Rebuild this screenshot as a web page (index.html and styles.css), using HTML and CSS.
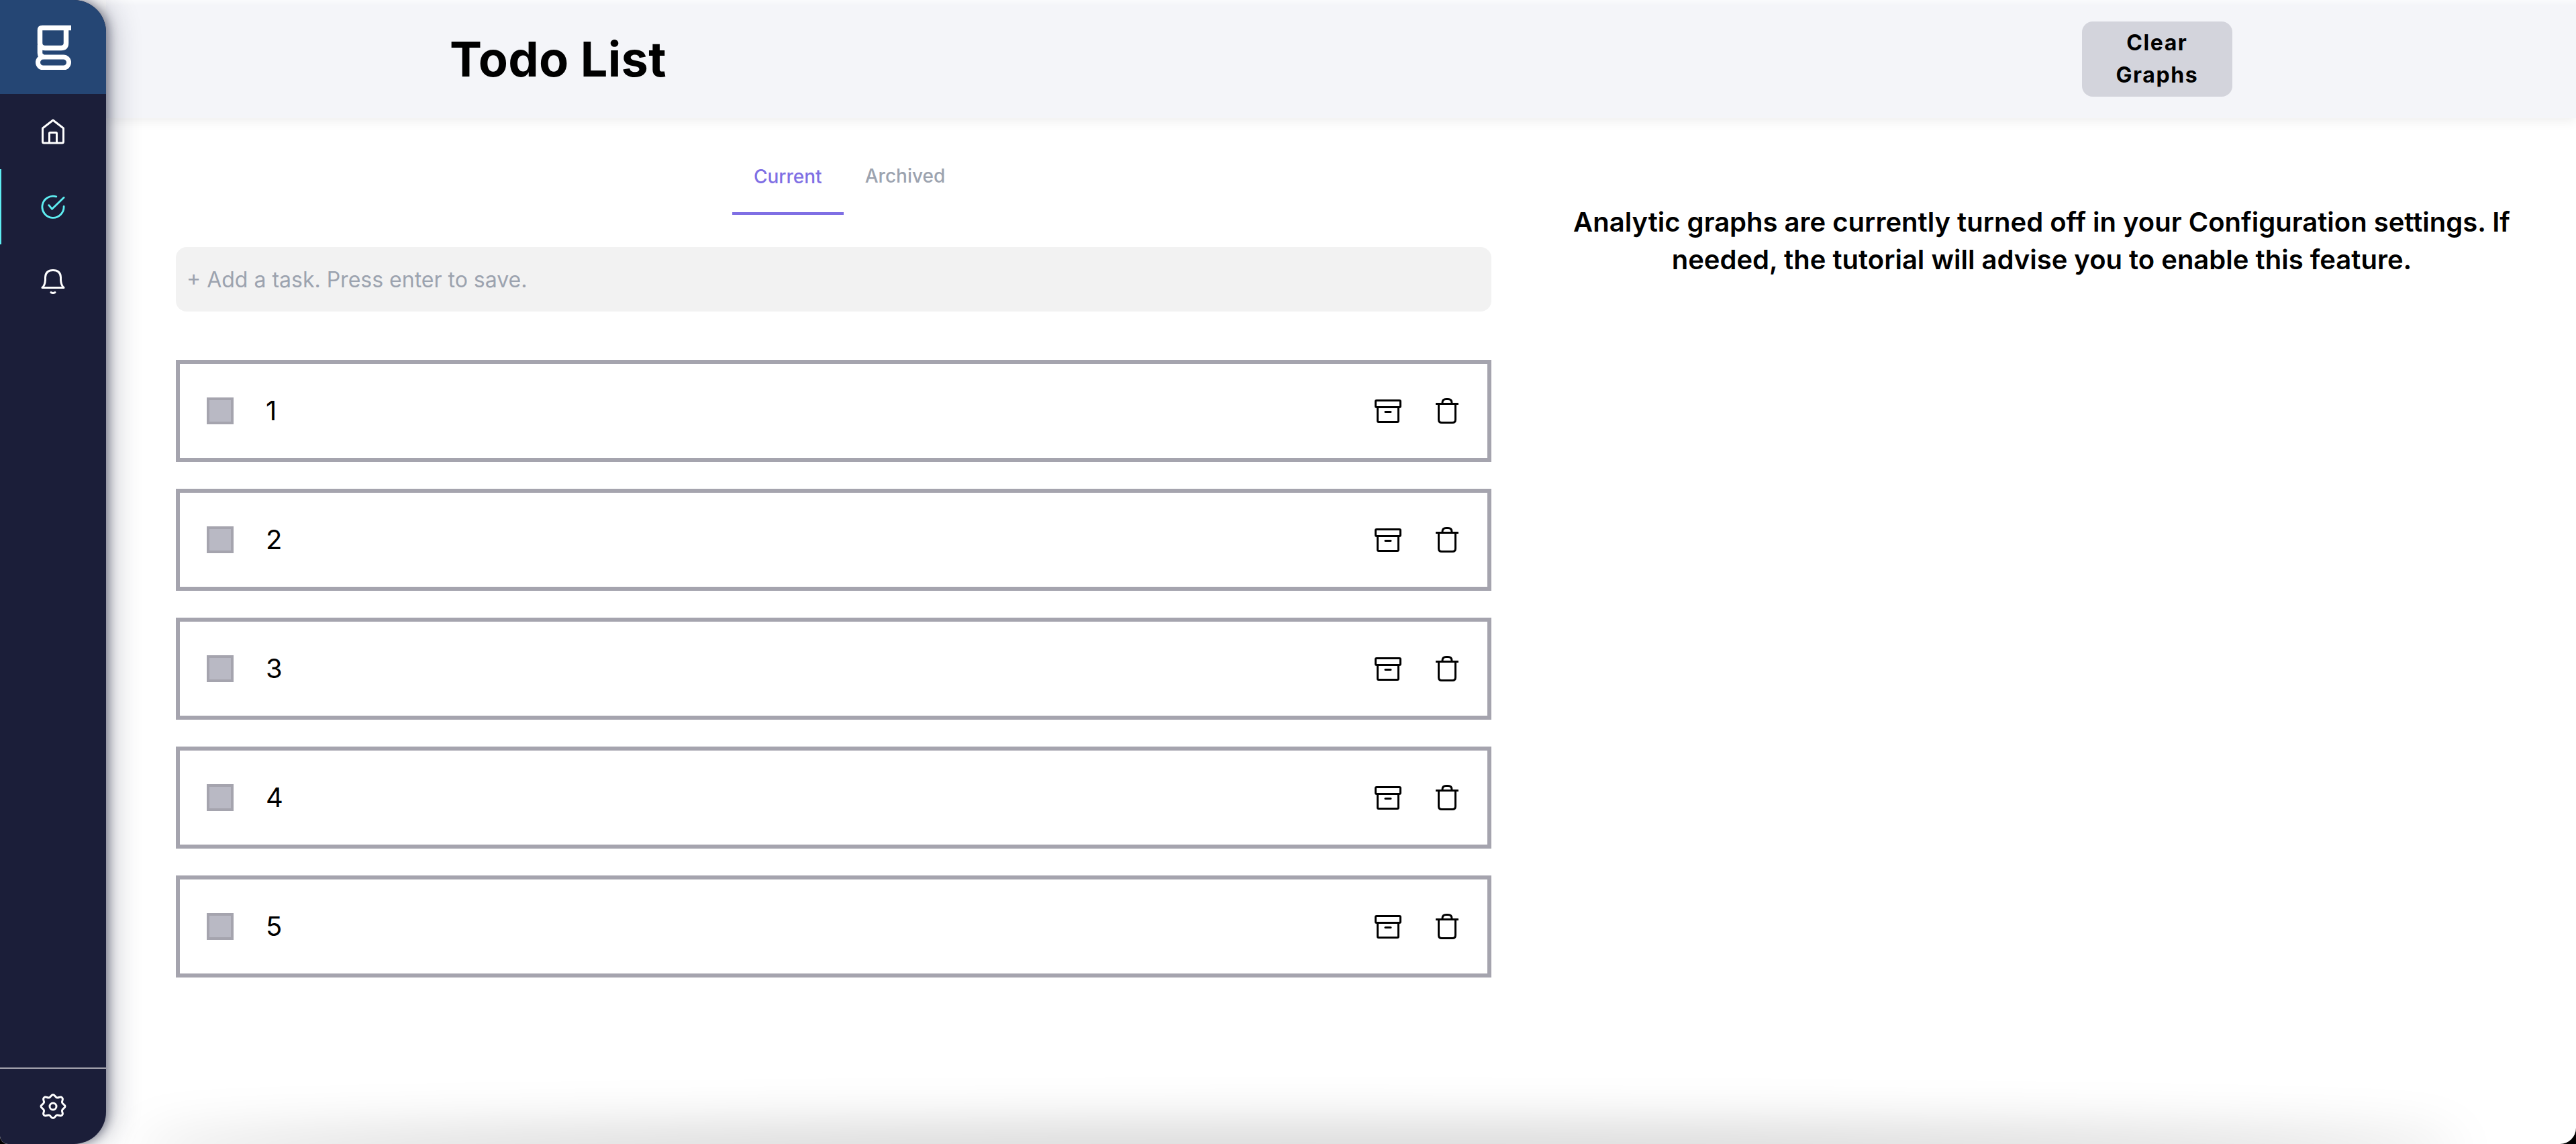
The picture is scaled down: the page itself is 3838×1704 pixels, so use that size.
FILE: index.html
```html
<!DOCTYPE html>
<html lang="en">
<head>
<meta charset="utf-8">
<title>Todo List</title>
<link rel="stylesheet" href="styles.css">
</head>
<body>
<div class="app">
  <aside class="sidebar">
    <div class="brand">
      <svg class="logo" viewBox="0 0 53 67" fill="none" stroke="#fff" stroke-width="7.500">
        <path d="M53 4.500H10Q6.500 4.500 6.500 8V27Q6.500 34.500 14 34.500H38Q45.500 34.500 45.500 27V4.500"/>
        <path d="M6.500 30V42Q6.500 47 12 47.500"/>
        <rect x="3.500" y="48" width="46" height="16" rx="8" stroke-width="7"/>
      </svg>
    </div>
    <nav class="nav">
      <a class="nav-item">
        <svg class="nav-icon" viewBox="0 0 36 38" fill="none" stroke="#fff" stroke-width="3" stroke-linejoin="round">
          <path d="M18 2L33.500 14V34Q33.500 36 31.500 36H4.500Q2.500 36 2.500 34V14Z"/>
          <path d="M12.500 36V21.500Q12.500 20.500 13.500 20.500H22.500Q23.500 20.500 23.500 21.500V36"/>
        </svg>
      </a>
      <a class="nav-item active">
        <svg class="nav-icon" viewBox="0 0 38 38" fill="none" stroke="#5eeef2" stroke-width="3" stroke-linecap="round" stroke-linejoin="round">
          <path d="M36 18.500A17 17 0 1 1 24 3"/>
          <path d="M12.500 16.500L17.500 22.500L36 4.500"/>
        </svg>
      </a>
      <a class="nav-item">
        <svg class="nav-icon" viewBox="0 0 36 38" fill="none" stroke="#fff" stroke-width="3" stroke-linecap="round" stroke-linejoin="round">
          <path d="M2 27.500H34Q30 24 29.500 16V12Q29 1.500 18 1.500Q7 1.500 6.500 12V16Q6 24 2 27.500Z"/>
          <path d="M15 34.500Q18 36.500 21 34.500"/>
        </svg>
      </a>
    </nav>
    <div class="sidebar-foot">
      <svg class="nav-icon gear" viewBox="0 0 40 40" fill="none" stroke="#fff" stroke-width="3" stroke-linejoin="round">
        <path d="M20 2.500C23 2.500 23 6.500 26 7C29 7.500 31 4.500 33.500 7C36 9.500 33 11.500 33.500 14C34 17 38 17 38 20C38 23 34 23 33.500 26C33 29 36 30.500 33.500 33C31 35.500 29 32.500 26 33C23 33.500 23 37.500 20 37.500C17 37.500 17 33.500 14 33C11 32.500 9 35.500 6.500 33C4 30.500 7 29 6.500 26C6 23 2 23 2 20C2 17 6 17 6.500 14C7 11.500 4 9.500 6.500 7C9 4.500 11 7.500 14 7C17 6.500 17 2.500 20 2.500Z"/>
        <circle cx="20" cy="20" r="5"/>
      </svg>
    </div>
  </aside>
  <main class="main">
    <header class="topbar">
      <h1 class="title">Todo List</h1>
      <button class="clear-btn">Clear Graphs</button>
    </header>
    <div class="content">
      <section class="tasks">
        <div class="tabs">
          <div class="tab current">Current</div>
          <div class="tab archived">Archived</div>
        </div>
        <input class="add-task" type="text" placeholder="+ Add a task. Press enter to save.">
        <ul class="task-list">
          <li class="task"><span class="check"></span><span class="task-name">1</span>
            <svg class="archive" viewBox="0 0 40 35" fill="none" stroke="#000" stroke-width="3" stroke-linejoin="round" stroke-linecap="round"><rect x="1.500" y="1.500" width="37" height="10" rx="1.500"/><path d="M4.500 11.500V32Q4.500 33.500 6 33.500H34Q35.500 33.500 35.500 32V11.500"/><path d="M16 18.500H24"/></svg>
            <svg class="trash" viewBox="0 0 34 38" fill="none" stroke="#000" stroke-width="3" stroke-linejoin="round" stroke-linecap="round"><path d="M1 8.500H33"/><path d="M4.500 8.500V32Q4.500 36.500 9 36.500H25Q29.500 36.500 29.500 32V8.500"/><path d="M10 8.500V7Q10 1.500 15.500 1.500H18.500Q24 1.500 24 7V8.500"/></svg>
          </li>
          <li class="task"><span class="check"></span><span class="task-name">2</span>
            <svg class="archive" viewBox="0 0 40 35" fill="none" stroke="#000" stroke-width="3" stroke-linejoin="round" stroke-linecap="round"><rect x="1.500" y="1.500" width="37" height="10" rx="1.500"/><path d="M4.500 11.500V32Q4.500 33.500 6 33.500H34Q35.500 33.500 35.500 32V11.500"/><path d="M16 18.500H24"/></svg>
            <svg class="trash" viewBox="0 0 34 38" fill="none" stroke="#000" stroke-width="3" stroke-linejoin="round" stroke-linecap="round"><path d="M1 8.500H33"/><path d="M4.500 8.500V32Q4.500 36.500 9 36.500H25Q29.500 36.500 29.500 32V8.500"/><path d="M10 8.500V7Q10 1.500 15.500 1.500H18.500Q24 1.500 24 7V8.500"/></svg>
          </li>
          <li class="task"><span class="check"></span><span class="task-name">3</span>
            <svg class="archive" viewBox="0 0 40 35" fill="none" stroke="#000" stroke-width="3" stroke-linejoin="round" stroke-linecap="round"><rect x="1.500" y="1.500" width="37" height="10" rx="1.500"/><path d="M4.500 11.500V32Q4.500 33.500 6 33.500H34Q35.500 33.500 35.500 32V11.500"/><path d="M16 18.500H24"/></svg>
            <svg class="trash" viewBox="0 0 34 38" fill="none" stroke="#000" stroke-width="3" stroke-linejoin="round" stroke-linecap="round"><path d="M1 8.500H33"/><path d="M4.500 8.500V32Q4.500 36.500 9 36.500H25Q29.500 36.500 29.500 32V8.500"/><path d="M10 8.500V7Q10 1.500 15.500 1.500H18.500Q24 1.500 24 7V8.500"/></svg>
          </li>
          <li class="task"><span class="check"></span><span class="task-name">4</span>
            <svg class="archive" viewBox="0 0 40 35" fill="none" stroke="#000" stroke-width="3" stroke-linejoin="round" stroke-linecap="round"><rect x="1.500" y="1.500" width="37" height="10" rx="1.500"/><path d="M4.500 11.500V32Q4.500 33.500 6 33.500H34Q35.500 33.500 35.500 32V11.500"/><path d="M16 18.500H24"/></svg>
            <svg class="trash" viewBox="0 0 34 38" fill="none" stroke="#000" stroke-width="3" stroke-linejoin="round" stroke-linecap="round"><path d="M1 8.500H33"/><path d="M4.500 8.500V32Q4.500 36.500 9 36.500H25Q29.500 36.500 29.500 32V8.500"/><path d="M10 8.500V7Q10 1.500 15.500 1.500H18.500Q24 1.500 24 7V8.500"/></svg>
          </li>
          <li class="task"><span class="check"></span><span class="task-name">5</span>
            <svg class="archive" viewBox="0 0 40 35" fill="none" stroke="#000" stroke-width="3" stroke-linejoin="round" stroke-linecap="round"><rect x="1.500" y="1.500" width="37" height="10" rx="1.500"/><path d="M4.500 11.500V32Q4.500 33.500 6 33.500H34Q35.500 33.500 35.500 32V11.500"/><path d="M16 18.500H24"/></svg>
            <svg class="trash" viewBox="0 0 34 38" fill="none" stroke="#000" stroke-width="3" stroke-linejoin="round" stroke-linecap="round"><path d="M1 8.500H33"/><path d="M4.500 8.500V32Q4.500 36.500 9 36.500H25Q29.500 36.500 29.500 32V8.500"/><path d="M10 8.500V7Q10 1.500 15.500 1.500H18.500Q24 1.500 24 7V8.500"/></svg>
          </li>
        </ul>
      </section>
      <section class="graphs">
        <p class="graphs-note">Analytic graphs are currently turned off in your Configuration settings. If needed, the tutorial will advise you to enable this feature.</p>
      </section>
    </div>
    <div class="bottom-glow"></div>
  </main>
</div>
</body>
</html>
```
FILE: styles.css
```css
* { box-sizing: border-box; }
html, body { margin: 0; height: 100%; background: #000; }
body { font-family: Inter, "Liberation Sans", sans-serif; color: #000; }
.app {
  display: flex;
  width: 3838px;
  height: 1704px;
  background: #fff;
  border-radius: 0 0 24px 12px;
  overflow: hidden;
}
.sidebar {
  position: relative;
  z-index: 2;
  flex: 0 0 158px;
  display: flex;
  flex-direction: column;
  background: #1b1e39;
  border-radius: 0 48px 48px 12px;
  box-shadow: 4px 0 14px rgba(27, 30, 57, 0.45), 8px 0 44px rgba(27, 30, 57, 0.3);
  overflow: hidden;
}
.brand {
  flex: 0 0 140px;
  display: flex;
  align-items: center;
  justify-content: center;
  background: #254674;
}
.logo { width: 53px; height: 67px; display: block; }
.nav { display: flex; flex-direction: column; flex: 1; }
.nav-item {
  height: 112px;
  display: flex;
  align-items: center;
  justify-content: center;
}
.nav-item.active { box-shadow: inset 2px 0 0 #5eeef2; }
.nav-icon { width: 36px; height: 38px; display: block; }
.sidebar-foot {
  flex: 0 0 114px;
  display: flex;
  align-items: center;
  justify-content: center;
  border-top: 2px solid #a5a4ae;
}
.gear { width: 40px; height: 40px; }
.main { position: relative; flex: 1; min-width: 0; display: flex; flex-direction: column; }
.topbar {
  position: relative;
  flex: 0 0 176px;
  display: flex;
  align-items: center;
  background: #f4f5f9;
  box-shadow: 0 4px 16px rgba(0, 0, 0, 0.07), inset 0 10px 10px -8px rgba(255, 255, 255, 0.8);
}
.title { margin: 0 0 0 512px; font-size: 72px; line-height: 88px; font-weight: 700; letter-spacing: 0.3px; }
.clear-btn {
  margin-left: 2109px;
  width: 224px;
  height: 112px;
  padding: 0 32px;
  border: 0;
  border-radius: 16px;
  background: #d3d4dc;
  color: #000;
  font-family: inherit;
  font-size: 32px;
  line-height: 48px;
  font-weight: 700;
  letter-spacing: 1.6px;
}
.content { flex: 1; display: flex; min-height: 0; }
.tasks { flex: 0 0 2064px; padding: 0 0 0 104px; display: flex; flex-direction: column; }
.tabs { display: flex; justify-content: center; height: 144px; padding-left: 15px; }
.tab { font-size: 28px; line-height: 36px; font-weight: 500; }
.current {
  width: 166px;
  height: 144px;
  padding-top: 69px;
  text-align: center;
  color: #7f6fe4;
  border-bottom: 4px solid #7f6fe4;
}
.archived { margin-left: 32px; padding-top: 68px; color: #9ca3af; }
.add-task {
  margin-top: 48px;
  height: 96px;
  width: 1960px;
  padding: 0 16px;
  border: 0;
  border-radius: 16px;
  background: #f2f2f2;
  font-family: inherit;
  font-size: 32px;
  outline: none;
}
.add-task::placeholder { color: #9ca3af; opacity: 1; }
.task-list { list-style: none; margin: 72px 0 0; padding: 0; width: 1960px; display: flex; flex-direction: column; gap: 40px; }
.task {
  height: 152px;
  display: flex;
  align-items: center;
  padding: 0 43px 0 40px;
  border: 6px solid #a5a4ae;
}
.check {
  flex: 0 0 40px;
  height: 40px;
  background: #b9b9c4;
  border: 4px solid #a5a4ae;
}
.task-name { flex: 1; margin-left: 48px; font-size: 40px; line-height: 48px; }
.archive { width: 40px; height: 35px; display: block; }
.trash { width: 34px; height: 38px; margin-left: 51px; display: block; }
.graphs { flex: 1; padding: 0 40px 0 64px; }
.graphs-note {
  margin: 127px 0 0;
  text-align: center;
  font-size: 40px;
  line-height: 56px;
  font-weight: 600;
}
.bottom-glow {
  position: absolute;
  left: 72px;
  right: 198px;
  bottom: -20px;
  height: 20px;
  border-radius: 50%;
  box-shadow: 0 0 80px 20px rgba(0, 0, 0, 0.22);
}
```
